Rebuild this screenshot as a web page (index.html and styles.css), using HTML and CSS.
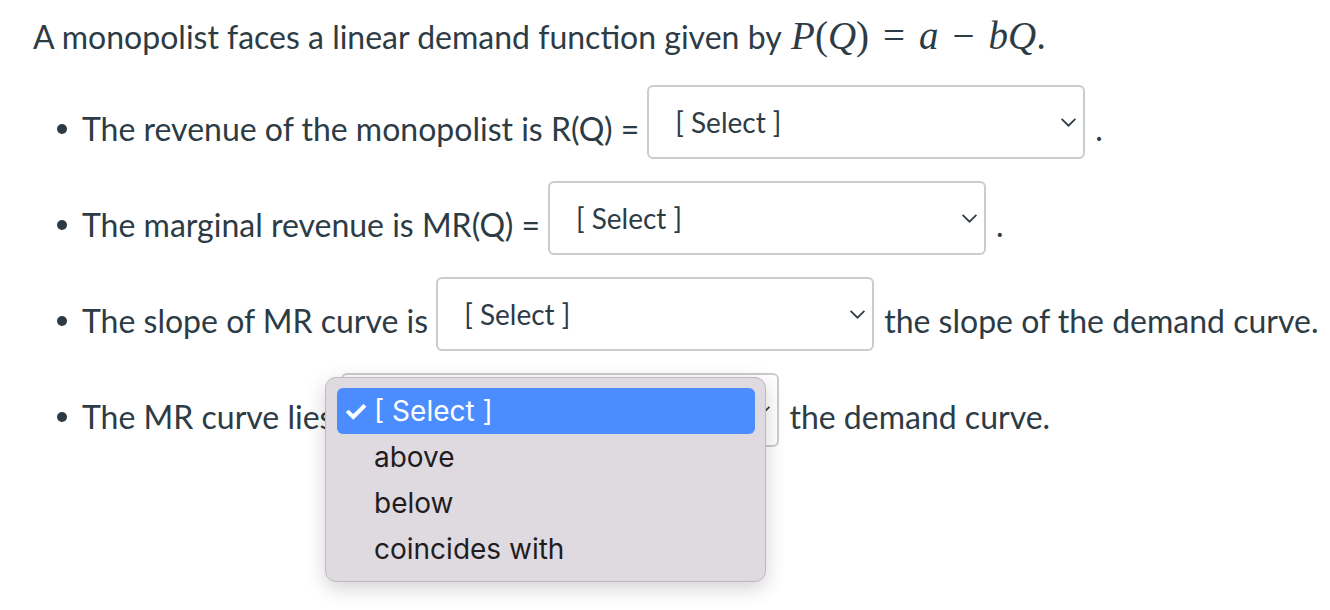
FILE: index.html
```html
<!DOCTYPE html>
<html>
<head>
<meta charset="utf-8">
<link rel="stylesheet" href="styles.css">
</head>
<body>
<div class="page">
  <p class="intro">A monopolist faces a linear demand function given by <span class="math"><i>P</i><span class="up">(</span><i>Q</i><span class="up">)</span><span class="op">=</span><i>a</i><span class="op">−</span><i>b</i><i>Q</i><span class="up">.</span></span></p>
  <ul class="items">
    <li class="item"><span class="txt">The revenue of the monopolist is R(Q) =</span><span class="select"><span class="sel-text">[ Select ]</span><svg class="chev" viewBox="0 0 16 10" width="17" height="11"><path d="M1.5 1.5 L8 8 L14.5 1.5" fill="none" stroke="#2d3b45" stroke-width="1.6"/></svg></span><span class="txt after">.</span></li>
    <li class="item"><span class="txt">The marginal revenue is MR(Q) =</span><span class="select"><span class="sel-text">[ Select ]</span><svg class="chev" viewBox="0 0 16 10" width="17" height="11"><path d="M1.5 1.5 L8 8 L14.5 1.5" fill="none" stroke="#2d3b45" stroke-width="1.6"/></svg></span><span class="txt after">.</span></li>
    <li class="item"><span class="txt">The slope of MR curve is</span><span class="select"><span class="sel-text">[ Select ]</span><svg class="chev" viewBox="0 0 16 10" width="17" height="11"><path d="M1.5 1.5 L8 8 L14.5 1.5" fill="none" stroke="#2d3b45" stroke-width="1.6"/></svg></span><span class="txt after">the slope of the demand curve.</span></li>
    <li class="item"><span class="txt">The MR curve lies</span><span class="select"><span class="sel-text">[ Select ]</span><svg class="chev" viewBox="0 0 16 10" width="17" height="11"><path d="M1.5 1.5 L8 8 L14.5 1.5" fill="none" stroke="#2d3b45" stroke-width="1.6"/></svg></span><span class="txt after">the demand curve.</span></li>
  </ul>
  <div class="menu">
    <div class="opt active"><span class="check">✓</span>[ Select ]</div>
    <div class="opt">above</div>
    <div class="opt">below</div>
    <div class="opt">coincides with</div>
  </div>
</div>
</body>
</html>
```
FILE: styles.css
```css
html, body {
  margin: 0;
  padding: 0;
  background: #ffffff;
}
.page {
  position: relative;
  min-height: 610px;
  box-sizing: border-box;
  padding: 12px 0 0 33px;
  font-family: Lato, "Noto Sans", sans-serif;
  color: #2d3b45;
  font-size: 32px;
}
.intro {
  margin: 0;
  line-height: 48px;
  white-space: nowrap;
}
.math {
  font-family: "Liberation Serif", "DejaVu Serif", serif;
  font-size: 39px;
  margin-left: 2px;
}
.math i {
  font-style: italic;
}
.math .op {
  margin: 0 14px;
}
.items {
  list-style: none;
  margin: 24px 0 0 0;
  padding: 0;
}
.item {
  display: flex;
  align-items: center;
  height: 74px;
  margin-bottom: 22px;
  white-space: nowrap;
}
.item::before {
  content: "";
  width: 10px;
  height: 10px;
  border-radius: 50%;
  background: #2d3b45;
  margin: 14px 15px 0 24px;
  flex: none;
}
.txt {
  padding-top: 14px;
  line-height: 34px;
}
.after {
  margin-left: 10px;
}
.select {
  box-sizing: border-box;
  width: 438px;
  height: 74px;
  margin-left: 8px;
  border: 2px solid #c7cdd1;
  border-radius: 6px;
  background: #fff;
  display: flex;
  align-items: center;
  justify-content: space-between;
  padding: 0 6px 0 26px;
  flex: none;
  font-size: 28px;
}
.sel-text {
  line-height: 34px;
}
.chev {
  margin-top: 0;
}
.menu {
  position: absolute;
  left: 325px;
  top: 377px;
  width: 441px;
  height: 205px;
  box-sizing: border-box;
  background: #dfdadf;
  border: 1px solid #bdb9bd;
  border-radius: 11px;
  box-shadow: 0 6px 20px rgba(0,0,0,0.18);
  padding: 10px 10px 0 11px;
  font-family: Inter, "Noto Sans", sans-serif;
  font-size: 28px;
  color: #1f1d1f;
}
.opt {
  height: 46px;
  line-height: 46px;
  padding-left: 37px;
  position: relative;
  border-radius: 6px;
}
.opt.active {
  background: #4b8dfe;
  color: #fff;
}
.check {
  position: absolute;
  left: 6px;
  top: 0;
  font-weight: 700;
}
```
